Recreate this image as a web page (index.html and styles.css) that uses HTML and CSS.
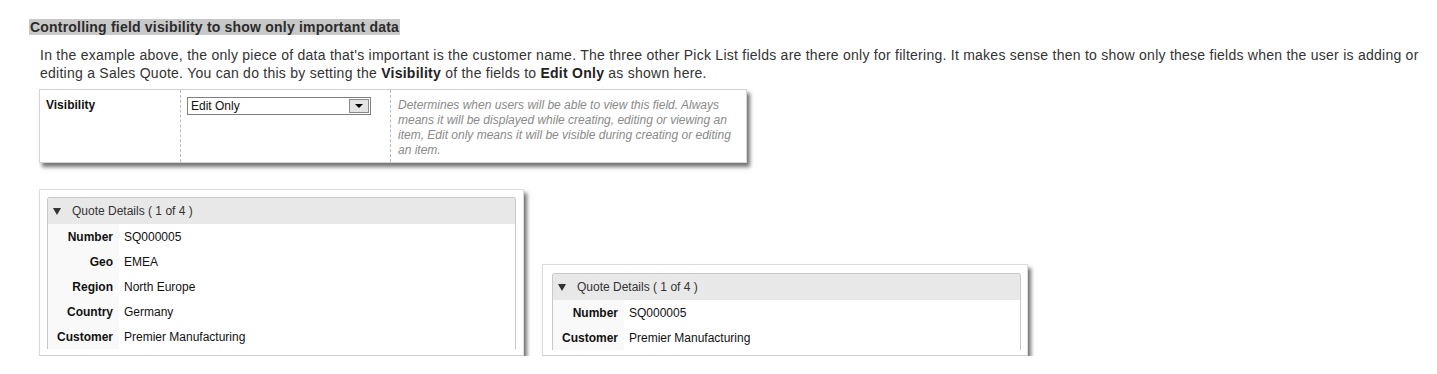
FILE: index.html
```html
<!DOCTYPE html>
<html lang="en">
    <head>
        <meta charset="utf-8">
        <title>Controlling field visibility</title>
        <link rel="stylesheet" href="styles.css">
    </head>
    <body>

        <div class='page'>

            <h3 class='heading'>Controlling field visibility to show only important data</h3>

            <p class='intro'>In the example above, the only piece of data that's important is the customer name. The three other Pick List fields are there only for filtering. It makes sense then to show only these fields when the user is adding or editing a Sales Quote. You can do this by setting the <b>Visibility</b> of the fields to <b>Edit Only</b> as shown here.</p>

            <div class='settingBox'>
                <div class='settingLabel'>Visibility</div>
                <div class='settingControl'>
                    <div class='fakeSelect'>
                        <span class='selectText'>Edit Only</span>
                        <span class='selectButton'><span class='arrowDown'></span></span>
                    </div>
                </div>
                <div class='settingHelp'>Determines when users will be able to view this field. Always means it will be displayed while creating, editing or viewing an item, Edit only means it will be visible during creating or editing an item.</div>
            </div>

            <div class='quoteRow'>

                <div class='quoteOuter first'>
                    <div class='quotePanel'>
                        <div class='quoteHeader'><span class='triangle'></span>Quote Details ( 1 of 4 )</div>
                        <div class='fieldRow'><div class='fieldLabel'>Number</div><div class='fieldValue'>SQ000005</div></div>
                        <div class='fieldRow'><div class='fieldLabel'>Geo</div><div class='fieldValue'>EMEA</div></div>
                        <div class='fieldRow'><div class='fieldLabel'>Region</div><div class='fieldValue'>North Europe</div></div>
                        <div class='fieldRow'><div class='fieldLabel'>Country</div><div class='fieldValue'>Germany</div></div>
                        <div class='fieldRow'><div class='fieldLabel'>Customer</div><div class='fieldValue'>Premier Manufacturing</div></div>
                    </div>
                </div>

                <div class='quoteOuter second'>
                    <div class='quotePanel'>
                        <div class='quoteHeader'><span class='triangle'></span>Quote Details ( 1 of 4 )</div>
                        <div class='fieldRow'><div class='fieldLabel'>Number</div><div class='fieldValue'>SQ000005</div></div>
                        <div class='fieldRow'><div class='fieldLabel'>Customer</div><div class='fieldValue'>Premier Manufacturing</div></div>
                    </div>
                </div>

            </div>

        </div>

    </body>
</html>
```

FILE: styles.css
```css
body
    {
        margin:           0px;
        background-color: #fff;
        font-family:      "Liberation Sans", Arial, sans-serif;
        color:            #333;
    }

.page
    {
        padding:          18px 0px 0px 29px;
    }

.heading
    {
        display:          inline-block;
        margin:           0px;
        padding:          0px 1px;
        background-color: #c8c8c8;
        font-size:        14px;
        line-height:      16px;
        font-weight:      bold;
        letter-spacing:   0.2px;
        color:            #2b2b2b;
    }

.intro
    {
        margin:           10px 0px 0px 11px;
        width:            1390px;
        font-size:        14px;
        line-height:      18px;
        letter-spacing:   0.25px;
        color:            #333;
    }

.intro b
    {
        color:            #222;
    }

/* the Visibility setting, as shown in the designer */

.settingBox
    {
        display:          flex;
        width:            706px;
        height:           72px;
        margin:           7px 0px 0px 10px;
        border:           1px solid #d4d4d4;
        background-color: #fff;
        box-shadow:       3px 4px 4px rgba(0, 0, 0, 0.55);
    }

.settingLabel
    {
        width:            134px;
        padding:          8px 0px 0px 6px;
        font-size:        12px;
        font-weight:      bold;
        color:            #111;
    }

.settingControl
    {
        width:            203px;
        padding:          7px 0px 0px 6px;
        border-left:      1px dashed #bbb;
    }

.fakeSelect
    {
        display:          flex;
        align-items:      center;
        justify-content:  space-between;
        width:            182px;
        height:           16px;
        border:           1px solid #7f7f7f;
        background-color: #fff;
    }

.selectText
    {
        padding-left:     3px;
        font-size:        12px;
        color:            #111;
    }

.selectButton
    {
        display:          flex;
        align-items:      center;
        justify-content:  center;
        width:            18px;
        height:           12px;
        margin-right:     1px;
        border:           1px solid #8a8a8a;
        background-color: #e4e4e4;
    }

.arrowDown
    {
        width:            0px;
        height:           0px;
        border-left:      4px solid transparent;
        border-right:     4px solid transparent;
        border-top:       4px solid #000;
    }

.settingHelp
    {
        flex:             1;
        padding:          8px 0px 0px 7px;
        border-left:      1px dashed #bbb;
        font-size:        12px;
        line-height:      15px;
        font-style:       italic;
        color:            #8a8a8a;
    }

/* the two Quote Details panels */

.quoteRow
    {
        display:          flex;
        align-items:      flex-end;
        gap:              18px;
        margin:           26px 0px 0px 10px;
    }

.quoteOuter
    {
        width:            469px;
        border:           1px solid #dcdcdc;
        border-bottom-color: #ccc;
        background-color: #fff;
        box-shadow:       3px 4px 4px rgba(0, 0, 0, 0.55);
    }

.quoteOuter.first
    {
        padding:          7px 7px 6px 7px;
    }

.quoteOuter.second
    {
        padding:          8px 6px 5px 9px;
    }

.quotePanel
    {
        border:           1px solid #c8c8c8;
        border-bottom:    none;
        border-top-left-radius:  3px;
        border-top-right-radius: 3px;
        background:       linear-gradient(to right, #f9f9f9 71px, #fff 71px);
    }

.quoteHeader
    {
        display:          flex;
        align-items:      center;
        height:           26px;
        background-color: #e8e8e8;
        border-top-left-radius:  3px;
        border-top-right-radius: 3px;
        font-size:        12px;
        color:            #333;
    }

.triangle
    {
        width:            0px;
        height:           0px;
        margin:           0px 11px 0px 5px;
        border-left:      4px solid transparent;
        border-right:     4px solid transparent;
        border-top:       7px solid #333;
    }

.fieldRow
    {
        display:          flex;
        align-items:      center;
        height:           25px;
        font-size:        12px;
    }

.fieldLabel
    {
        width:            65px;
        padding-right:    6px;
        text-align:       right;
        font-weight:      bold;
        color:            #111;
    }

.fieldValue
    {
        padding-left:     5px;
        color:            #111;
    }
```
